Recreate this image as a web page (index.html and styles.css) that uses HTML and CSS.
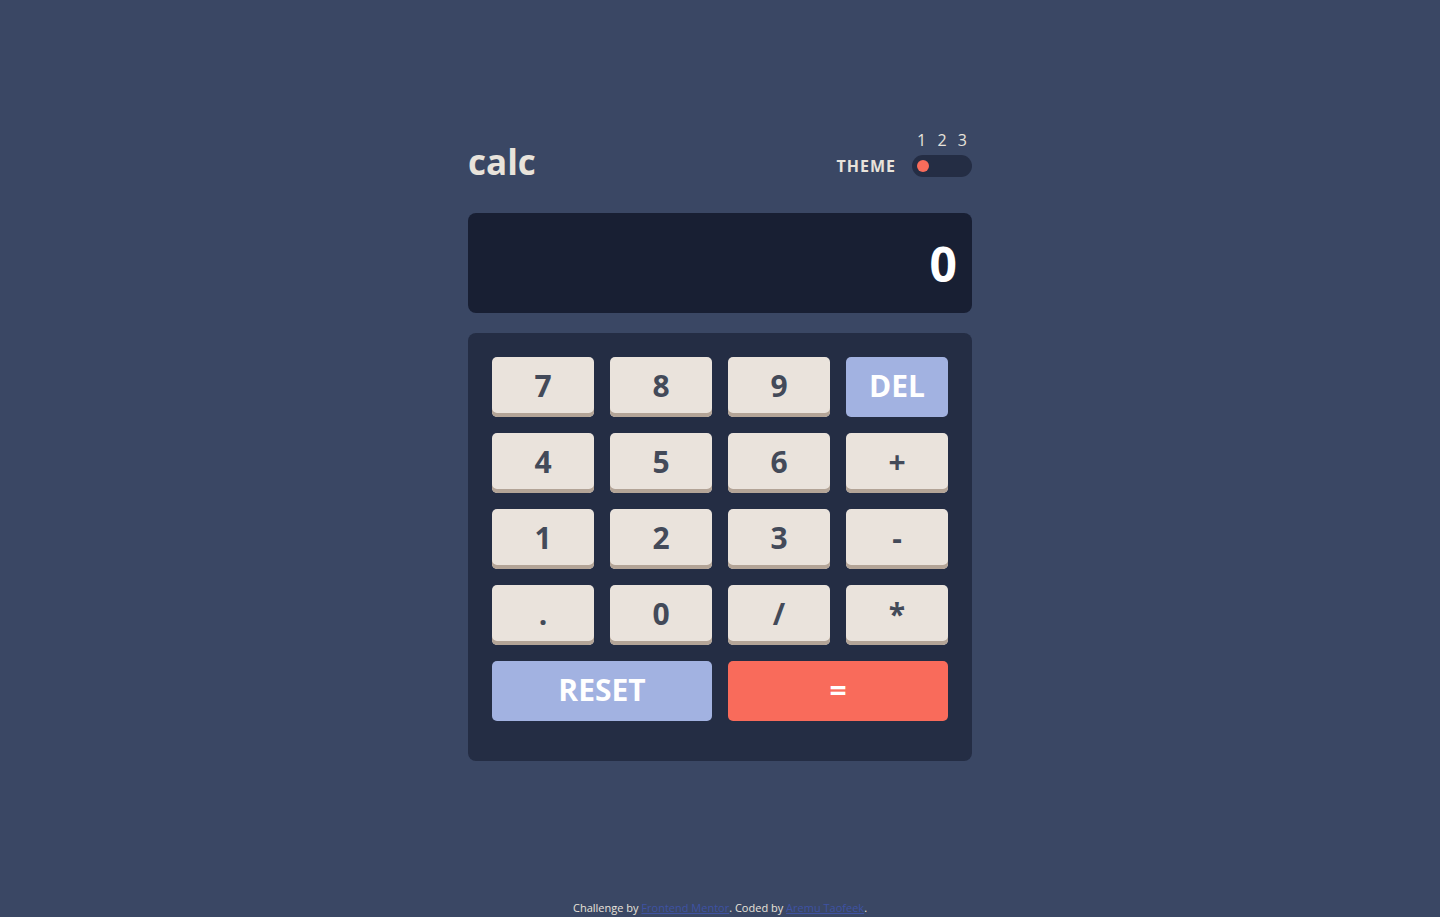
FILE: index.html
```html
<!DOCTYPE html>
<html lang="en">
<head>
<meta charset="UTF-8">
<title>Calculator app</title>
<link rel="stylesheet" href="styles.css">
</head>
<body>
<main class="app">
  <header class="header">
    <h1 class="logo">calc</h1>
    <div class="theme">
      <div class="theme-nums"><span>1</span><span>2</span><span>3</span></div>
      <span class="theme-label">THEME</span>
      <div class="toggle"><span class="knob"></span></div>
    </div>
  </header>
  <div class="screen">0</div>
  <div class="keypad">
    <button class="key">7</button>
    <button class="key">8</button>
    <button class="key">9</button>
    <button class="key key-blue">DEL</button>
    <button class="key">4</button>
    <button class="key">5</button>
    <button class="key">6</button>
    <button class="key">+</button>
    <button class="key">1</button>
    <button class="key">2</button>
    <button class="key">3</button>
    <button class="key">-</button>
    <button class="key">.</button>
    <button class="key">0</button>
    <button class="key">/</button>
    <button class="key">*</button>
    <button class="key key-blue key-wide">RESET</button>
    <button class="key key-red key-wide">=</button>
  </div>
</main>
<footer class="footer">Challenge by <a href="#">Frontend Mentor</a>. Coded by <a href="#">Aremu Taofeek</a>.</footer>
</body>
</html>
```
FILE: styles.css
```css
* { box-sizing: border-box; }
html, body { margin: 0; padding: 0; }
body {
  background: #3a4764;
  font-family: "Open Sans", "Noto Sans", sans-serif;
  color: #e8e3db;
  min-height: 100vh;
  display: flex;
  flex-direction: column;
}
.app {
  width: 504px;
  margin: 0 auto;
  padding-top: 130px;
}
.header {
  display: flex;
  justify-content: space-between;
  align-items: flex-end;
}
.logo {
  margin: 0 0 -2px 0;
  font-size: 35px;
  line-height: 1;
  font-weight: 700;
  color: #e8e3db;
}
.theme {
  display: grid;
  grid-template-columns: auto 60px;
  column-gap: 16px;
  row-gap: 5px;
  align-items: center;
}
.theme-nums {
  grid-column: 2;
  display: flex;
  justify-content: space-between;
  padding: 0 5px;
  font-size: 16px;
  line-height: 20px;
}
.theme-label {
  grid-column: 1;
  font-size: 16px;
  font-weight: 700;
  letter-spacing: 1px;
  line-height: 20px;
}
.toggle {
  grid-column: 2;
  height: 22px;
  border-radius: 11px;
  background: #242d44;
  padding: 5px;
  display: flex;
}
.knob {
  width: 12px;
  height: 12px;
  border-radius: 50%;
  background: #f96c5b;
}
.screen {
  margin-top: 36px;
  height: 100px;
  border-radius: 8px;
  background: #181f33;
  display: flex;
  align-items: center;
  justify-content: flex-end;
  padding: 2px 15px 0;
  font-size: 48px;
  font-weight: 700;
  line-height: 1;
  color: #ffffff;
}
.keypad {
  margin-top: 20px;
  background: #242d44;
  border-radius: 8px;
  padding: 24px 24px 40px;
  display: grid;
  grid-template-columns: repeat(4, 1fr);
  grid-auto-rows: 60px;
  gap: 16px;
}
.key {
  border: none;
  border-radius: 5px;
  background: #eae3dc;
  box-shadow: inset 0 -4px 0 #b3a497;
  color: #434a59;
  font-family: "Open Sans", "Noto Sans", sans-serif;
  font-size: 30px;
  font-weight: 700;
  line-height: 1;
  padding: 0 0 2px;
  display: flex;
  align-items: center;
  justify-content: center;
}
.key-blue {
  background: #a2b2e1;
  box-shadow: none;
  color: #ffffff;
}
.key-red {
  background: #f96b5b;
  box-shadow: none;
  color: #ffffff;
}
.key-wide { grid-column: span 2; }
.footer {
  margin-top: auto;
  text-align: center;
  font-size: 11px;
  line-height: 18px;
  color: #e8e3db;
}
.footer a { color: #3e52a3; }
```
